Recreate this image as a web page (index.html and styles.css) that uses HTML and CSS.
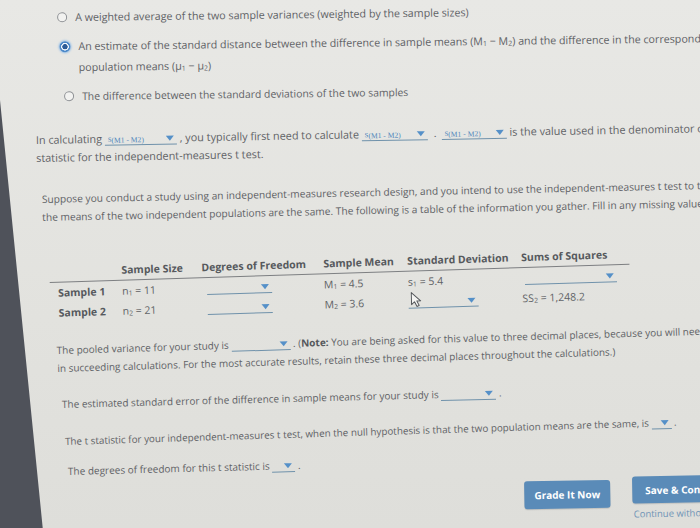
FILE: index.html
```
<!DOCTYPE html>
<html lang="en">
<head>
<meta charset="utf-8">
<title>Independent-measures t test</title>
<link rel="stylesheet" href="styles.css">
</head>
<body>
<div class="page">
  <div class="options">
    <div class="opt opt1"><span class="radio"></span><span class="opt-text">A weighted average of the two sample variances (weighted by the sample sizes)</span></div>
    <div class="opt opt2"><span class="radio sel"></span><span class="opt-text">An estimate of the standard distance between the difference in sample means (M<sub>1</sub> &minus; M<sub>2</sub>) and the difference in the corresponding<br>population means (&mu;<sub>1</sub> &minus; &mu;<sub>2</sub>)</span></div>
    <div class="opt opt3"><span class="radio"></span><span class="opt-text">The difference between the standard deviations of the two samples</span></div>
  </div>

  <p class="q q1">In calculating <span class="dd w72"><span class="caret"></span><span class="val"><i>s</i><sub>(M1 - M2)</sub></span></span> , you typically first need to calculate <span class="dd w66"><span class="caret"></span><span class="val"><i>s</i><sub>(M1 - M2)</sub></span></span><span class="dot">.</span><span class="dd w65"><span class="caret"></span><span class="val"><i>s</i><sub>(M1 - M2)</sub></span></span> is the value used in the denominator of the t<br>statistic for the independent-measures t test.</p>

  <p class="q q2">Suppose you conduct a study using an independent-measures research design, and you intend to use the independent-measures t test to test whether<br>the means of the two independent populations are the same. The following is a table of the information you gather. Fill in any missing values.</p>

  <div class="data">
    <div class="row head">
      <span></span>
      <span>Sample Size</span>
      <span>Degrees of Freedom</span>
      <span>Sample Mean</span>
      <span>Standard Deviation</span>
      <span>Sums of Squares</span>
    </div>
    <div class="row">
      <span class="lbl">Sample 1</span>
      <span class="cell">n<sub>1</sub> = 11</span>
      <span class="cell"><span class="dd w65 ml5"><span class="caret"></span></span></span>
      <span class="cell">M<sub>1</sub> = 4.5</span>
      <span class="cell">s<sub>1</sub> = 5.4</span>
      <span class="cell"><span class="dd w92 ml3"><span class="caret"></span></span></span>
    </div>
    <div class="row">
      <span class="lbl">Sample 2</span>
      <span class="cell">n<sub>2</sub> = 21</span>
      <span class="cell"><span class="dd w65 ml5"><span class="caret"></span></span></span>
      <span class="cell">M<sub>2</sub> = 3.6</span>
      <span class="cell cursor-host"><span class="dd w70"><span class="caret"></span></span><svg class="cursor" width="12" height="16" viewBox="0 0 12 16"><path d="M1 1 L1 13 L4 10.2 L6.4 15 L8.6 14 L6.3 9.4 L10.2 9.4 Z" fill="#f4f4f2" stroke="#55585c" stroke-width="1" stroke-linejoin="round"/></svg></span>
      <span class="cell">SS<sub>2</sub> = 1,248.2</span>
    </div>
  </div>

  <p class="q q3">The pooled variance for your study is <span class="dd w59"><span class="caret"></span></span> . (<b>Note:</b> You are being asked for this value to three decimal places, because you will need to use it<br>in succeeding calculations. For the most accurate results, retain these three decimal places throughout the calculations.)</p>

  <p class="q q4">The estimated standard error of the difference in sample means for your study is <span class="dd w55"><span class="caret"></span></span> .</p>

  <p class="q q5">The t statistic for your independent-measures t test, when the null hypothesis is that the two population means are the same, is <span class="dd w20"><span class="caret"></span></span> .</p>

  <p class="q q6">The degrees of freedom for this t statistic is <span class="dd w23"><span class="caret"></span></span> .</p>

  <div class="actions">
    <button class="btn grade" type="button">Grade It Now</button>
    <div class="save-col">
      <button class="btn save" type="button">Save &amp; Continue</button>
      <a class="skip" href="#">Continue without saving</a>
    </div>
  </div>
</div>
</body>
</html>
```
FILE: styles.css
```
html, body {
  margin: 0;
  padding: 0;
}

body {
  width: 700px;
  height: 528px;
  overflow: hidden;
  font-family: "Open Sans", "Liberation Sans", sans-serif;
  font-size: 10px;
  color: #5f6266;
  background:
    linear-gradient(84.3deg, #4f525a 0 42px, rgba(0, 0, 0, 0) 43px),
    linear-gradient(180deg, #e8e8e5 0%, #e2e2de 60%, #dededa 100%);
}

.page {
  padding-top: 8px;
  width: 700px;
}

sub {
  font-size: 0.65em;
  vertical-align: -1px;
  line-height: 0;
}

/* options */
.options {
  display: flex;
  flex-direction: column;
  font-size: 10.7px;
  transform: rotate(-0.7deg);
  transform-origin: 0 0;
}

.opt {
  display: flex;
  align-items: flex-start;
  gap: 8px;
  line-height: 20px;
  white-space: nowrap;
}

.opt1 { margin-left: 57px; }
.opt2 { margin-left: 59px; margin-top: 9px; line-height: 21px; }
.opt3 { margin-left: 63px; margin-top: 8px; font-size: 10.4px; }

.radio {
  flex: none;
  width: 10px;
  height: 10px;
  margin-top: 5px;
  border-radius: 50%;
  box-sizing: border-box;
  border: 1px solid #8d9094;
  background: #f2f2f0;
}

.radio.sel {
  width: 11px;
  height: 11px;
  border: none;
  background: radial-gradient(circle, #2d5c98 0 2.4px, #f4f7fb 2.9px 3.6px, #4b88c9 4.1px);
  box-shadow: 0 0 2px 1px #9cc2e8;
}

/* questions */
.q {
  margin: 0;
  line-height: 18px;
  white-space: nowrap;
  transform-origin: 0 50%;
}

.q1 { margin: 24px 0 0 36px; font-size: 10.85px; transform: rotate(-1deg); }
.q2 { margin: 23px 0 0 42px; font-size: 10.2px; transform: rotate(-1.2deg); }
.q3 { margin: 18px 0 0 57px; transform: rotate(-1.7deg); }
.q4 { margin: 18px 0 0 62px; transform: rotate(-1.5deg); }
.q5 { margin: 19px 0 0 65px; font-size: 9.85px; transform: rotate(-1.8deg); }
.q6 { margin: 12px 0 0 68px; transform: rotate(-1.5deg); }

.q b { color: #54575b; }

.dot {
  padding: 0 5px 0 6px;
}

/* dropdown */
.dd {
  display: inline-block;
  box-sizing: border-box;
  height: 12px;
  padding: 0 3px 0 3px;
  border-bottom: 1.5px solid #7092ab;
  vertical-align: -3px;
  line-height: 10px;
  overflow: hidden;
  text-align: left;
}

.dd .val {
  font-family: "Liberation Serif", serif;
  color: #4f86bb;
  font-size: 8px;
  white-space: nowrap;
}

.dd .val i {
  font-style: normal;
  font-size: 9px;
  vertical-align: 1px;
}

.dd .val sub {
  font-size: 7.6px;
  vertical-align: 0;
}

.caret {
  float: right;
  width: 0;
  height: 0;
  margin-top: 3px;
  border-left: 4.5px solid transparent;
  border-right: 4.5px solid transparent;
  border-top: 5px solid #5590c8;
}

.w20 { width: 20px; }
.w23 { width: 23px; }
.w55 { width: 55px; }
.w59 { width: 59px; }
.w65 { width: 65px; }
.w66 { width: 66px; }
.w70 { width: 70px; }
.w72 { width: 72px; }
.w92 { width: 92px; }
.ml3 { margin-left: 3px; }
.ml5 { margin-left: 5px; }

.cursor-host {
  position: relative;
}

.cursor {
  position: absolute;
  left: 2px;
  top: 0;
}

/* table */
.data {
  margin: 33px 0 0 50px;
  width: 580px;
  font-size: 10.5px;
  transform: rotate(-1.8deg);
  transform-origin: 0 50%;
}

.row {
  display: grid;
  grid-template-columns: 72px 80px 122px 84px 114px 108px;
  height: 20px;
  line-height: 20px;
  white-space: nowrap;
}

.row.head {
  height: 20px;
  padding-top: 3px;
  border-bottom: 1px solid #7d7f82;
  font-weight: 700;
  color: #56595d;
}

.row .lbl {
  padding-left: 8px;
  font-weight: 700;
  color: #56595d;
}

.row .cell {
  display: block;
}

/* actions */
.actions {
  display: flex;
  gap: 22px;
  align-items: flex-start;
  margin-top: -3px;
  padding-left: 524px;
  transform: rotate(-1deg);
  transform-origin: 600px 0;
}

.btn {
  flex: none;
  border: none;
  border-radius: 3px;
  background: #5a8bb8;
  color: #fff;
  font-family: "Open Sans", "Liberation Sans", sans-serif;
  font-weight: 700;
  font-size: 10px;
  height: 28px;
  padding: 0;
  white-space: nowrap;
  box-shadow: 0 1px 1px rgba(0, 0, 0, 0.12);
}

.grade {
  width: 86px;
  margin-top: 3px;
}

.save-col {
  flex: none;
  display: flex;
  flex-direction: column;
  align-items: flex-start;
}

.save {
  width: 100px;
  height: 27px;
  text-align: left;
  padding-left: 13px;
}

.skip {
  margin-top: 4px;
  padding-left: 1px;
  font-size: 9.5px;
  color: #6f94b6;
  text-decoration: none;
  white-space: nowrap;
}
```
